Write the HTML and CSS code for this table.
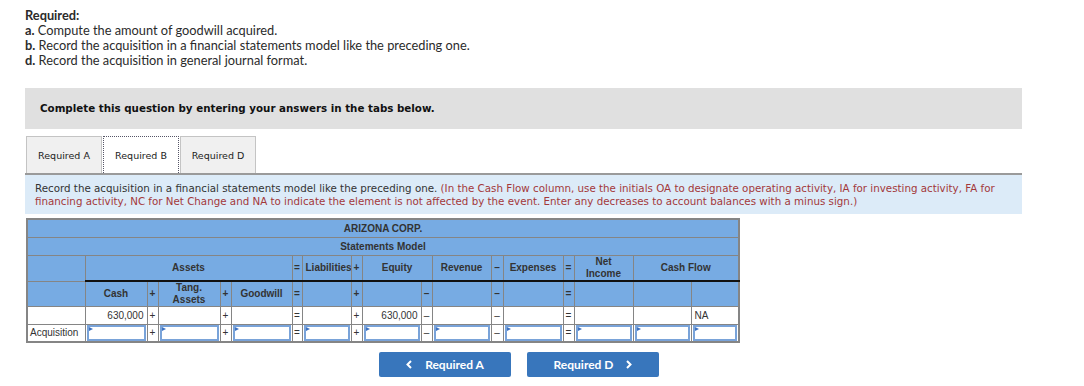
FILE: index.html
```html
<!DOCTYPE html>
<html lang="en">
<head>
    <meta charset="UTF-8">
    <meta name="viewport" content="width=device-width, initial-scale=1.0">
    <title>Required B</title>
    <link rel="stylesheet" href="styles.css">
</head>
<body>
    <div class="page">
        <div class="required">
            <p class="required-title">Required:</p>
            <p><b>a.</b> Compute the amount of goodwill acquired.</p>
            <p><b>b.</b> Record the acquisition in a financial statements model like the preceding one.</p>
            <p><b>d.</b> Record the acquisition in general journal format.</p>
        </div>

        <div class="notice">Complete this question by entering your answers in the tabs below.</div>

        <div class="tabs">
            <div class="tab">Required A</div>
            <div class="tab active">Required B</div>
            <div class="tab">Required D</div>
        </div>

        <div class="instructions">
            Record the acquisition in a financial statements model like the preceding one. <span class="hint">(In the Cash Flow column, use the initials OA to designate operating activity, IA for investing activity, FA for financing activity, NC for Net Change and NA to indicate the element is not affected by the event. Enter any decreases to account balances with a minus sign.)</span>
        </div>

        <table class="model">
            <colgroup>
                <col style="width: 58px">
                <col style="width: 62px">
                <col style="width: 11px">
                <col style="width: 62px">
                <col style="width: 11px">
                <col style="width: 61px">
                <col style="width: 10px">
                <col style="width: 49px">
                <col style="width: 11px">
                <col style="width: 59px">
                <col style="width: 11px">
                <col style="width: 59px">
                <col style="width: 12px">
                <col style="width: 60px">
                <col style="width: 11px">
                <col style="width: 59px">
                <col style="width: 58px">
                <col style="width: 48px">
            </colgroup>
            <tr class="title">
                <th colspan="18">ARIZONA CORP.</th>
            </tr>
            <tr class="title">
                <th colspan="18">Statements Model</th>
            </tr>
            <tr class="group">
                <th></th>
                <th colspan="5">Assets</th>
                <th class="op">=</th>
                <th>Liabilities</th>
                <th class="op">+</th>
                <th colspan="2">Equity</th>
                <th>Revenue</th>
                <th class="op">&ndash;</th>
                <th>Expenses</th>
                <th class="op">=</th>
                <th>Net<br>Income</th>
                <th colspan="2">Cash Flow</th>
            </tr>
            <tr class="sub">
                <th class="blank"></th>
                <th>Cash</th>
                <th class="op">+</th>
                <th>Tang.<br>Assets</th>
                <th class="op">+</th>
                <th>Goodwill</th>
                <th class="op">=</th>
                <th></th>
                <th class="op">+</th>
                <th></th>
                <th class="op">&ndash;</th>
                <th></th>
                <th class="op">&ndash;</th>
                <th></th>
                <th class="op">=</th>
                <th></th>
                <th></th>
                <th></th>
            </tr>
            <tr class="balance">
                <td></td>
                <td class="num">630,000</td>
                <td class="op">+</td>
                <td></td>
                <td class="op">+</td>
                <td></td>
                <td class="op">=</td>
                <td></td>
                <td class="op">+</td>
                <td class="num">630,000</td>
                <td class="op">&ndash;</td>
                <td></td>
                <td class="op">&ndash;</td>
                <td></td>
                <td class="op">=</td>
                <td></td>
                <td></td>
                <td>NA</td>
            </tr>
            <tr class="entries">
                <td class="label">Acquisition</td>
                <td class="entry"><div class="field"><input type="text"></div></td>
                <td class="op">+</td>
                <td class="entry"><div class="field"><input type="text"></div></td>
                <td class="op">+</td>
                <td class="entry"><div class="field"><input type="text"></div></td>
                <td class="op">=</td>
                <td class="entry"><div class="field"><input type="text"></div></td>
                <td class="op">+</td>
                <td class="entry"><div class="field"><input type="text"></div></td>
                <td class="op">&ndash;</td>
                <td class="entry"><div class="field"><input type="text"></div></td>
                <td class="op">&ndash;</td>
                <td class="entry"><div class="field"><input type="text"></div></td>
                <td class="op">=</td>
                <td class="entry"><div class="field"><input type="text"></div></td>
                <td class="entry"><div class="field"><input type="text"></div></td>
                <td class="entry"><div class="field"><input type="text"></div></td>
            </tr>
        </table>

        <div class="nav">
            <button class="nav-btn">
                <svg width="6" height="9" viewBox="0 0 6 9"><polyline points="5,1 1.5,4.5 5,8" fill="none" stroke="#fff" stroke-width="2"/></svg>
                Required A
            </button>
            <button class="nav-btn">
                Required D
                <svg width="6" height="9" viewBox="0 0 6 9"><polyline points="1,1 4.5,4.5 1,8" fill="none" stroke="#fff" stroke-width="2"/></svg>
            </button>
        </div>
    </div>
</body>
</html>
```

FILE: styles.css
```css
body {
    margin: 0;
    font-family: Lato, "Open Sans", sans-serif;
    color: #222;
    background-color: #fff;
}
.page {
    width: 997px;
    padding: 8px 0 0 25px;
}
.required p {
    margin: 0;
    font-size: 12.8px;
    line-height: 15px;
    color: #2b2b2b;
}
.required-title {
    font-weight: bold;
}
.notice {
    margin-top: 20px;
    height: 41px;
    padding-left: 15px;
    background-color: #e0e0e0;
    font: bold 10.3px/41px "DejaVu Sans", Verdana, sans-serif;
    color: #111;
}
.tabs {
    display: flex;
    gap: 1px;
    margin-top: 7px;
    padding-left: 1px;
}
.tab {
    width: 74px;
    height: 36px;
    display: flex;
    align-items: center;
    justify-content: center;
    border: 1px solid #c4c4c4;
    border-bottom: none;
    background-color: #f0f0f0;
    font: 9.5px "DejaVu Sans", Verdana, sans-serif;
    color: #222;
}
.tab.active {
    background-color: #fff;
    border: 1px dotted #556;
    border-bottom: none;
}
.instructions {
    padding: 7px 10px 6px;
    border-top: 2px solid #9a9a9a;
    background-color: #dcebf8;
    font: 10.3px/13px "DejaVu Sans", Verdana, sans-serif;
    color: #333;
}
.hint {
    color: #a3383a;
}
.model {
    margin: 4px 0 0 1px;
    width: 712px;
    table-layout: fixed;
    border-collapse: collapse;
    border: 2px solid #858585;
    font: 10px/12px "Liberation Sans", Arial, sans-serif;
    color: #333;
}
.model th,
.model td {
    border: 1px solid #858585;
    padding: 0 3px;
    overflow: hidden;
    white-space: nowrap;
}
.model th {
    background-color: #77abe3;
    font-weight: bold;
    text-align: center;
}
.model .op {
    padding: 0;
    text-align: center;
}
.title th {
    height: 17px;
}
.group th {
    height: 24px;
}
.sub th {
    height: 23px;
    border-top: 2px solid #111;
}
.sub th.blank {
    border-top: 1px solid #858585;
}
.balance td {
    height: 17px;
    background-color: #fff;
}
.entries td {
    height: 16px;
    background-color: #fff;
}
.model .num {
    text-align: right;
}
.model .label {
    padding-left: 2px;
}
.model .entry {
    padding: 0 1px;
}
.field {
    position: relative;
}
.field::before {
    content: "";
    position: absolute;
    top: 2px;
    left: 2px;
    border-top: 2px solid transparent;
    border-bottom: 2px solid transparent;
    border-left: 4px solid #3d72c2;
}
.field input {
    display: block;
    width: 100%;
    height: 16px;
    box-sizing: border-box;
    margin: 0;
    border: 2px solid #79a3d9;
    padding: 0 2px;
    font: 10px "Liberation Sans", Arial, sans-serif;
    background-color: #fff;
}
.nav {
    display: flex;
    gap: 16px;
    margin-top: 9px;
    padding-left: 354px;
}
.nav-btn {
    width: 132px;
    height: 25px;
    display: flex;
    align-items: center;
    justify-content: center;
    gap: 13px;
    border: none;
    border-radius: 2px;
    background-color: #3876bc;
    color: #fff;
    font: bold 12px Lato, "Liberation Sans", sans-serif;
    cursor: pointer;
}
```
